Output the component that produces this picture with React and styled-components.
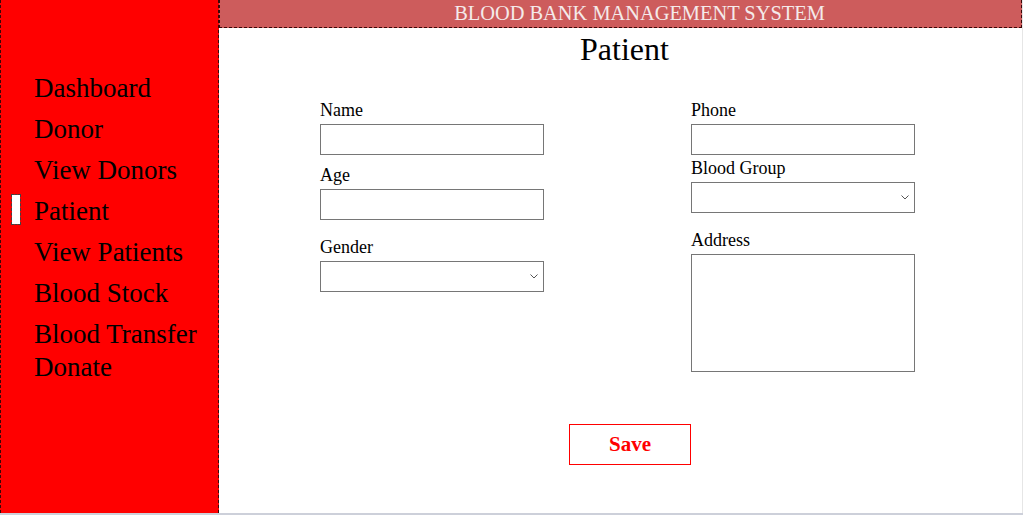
import React from "react";
import styled, { createGlobalStyle } from "styled-components";

const GlobalStyle = createGlobalStyle`
  html, body {
    margin: 0;
    padding: 0;
    background: #cdd0da;
    font-family: "Liberation Serif", "Times New Roman", serif;
  }
`;

const Layout = styled.div`
  display: flex;
  height: 513px;
  width: 1023px;
  background: #ffffff;
`;

const Sidebar = styled.nav`
  width: 217px;
  flex-shrink: 0;
  background: #ff0000;
  border-left: 1px dashed #3a0808;
  border-right: 1px dashed #3a0808;
  padding-top: 72px;
  box-sizing: content-box;
`;

const NavList = styled.ul`
  list-style: none;
  margin: 0;
  padding: 0 0 0 33px;
  display: flex;
  flex-direction: column;
  gap: 8px;
`;

const NavItem = styled.li`
  position: relative;
  font-size: 27px;
  line-height: 33px;
  color: #000000;

  &::before {
    content: "";
    display: ${(p) => (p.$active ? "block" : "none")};
    position: absolute;
    left: -22px;
    top: 0;
    width: 8px;
    height: 29px;
    background: #ffffff;
    outline: 1px dashed #444444;
  }
`;

const Main = styled.main`
  flex: 1;
  display: flex;
  flex-direction: column;
  border-right: 1px solid #e6e6e6;
`;

const Header = styled.header`
  height: 27px;
  background: #cd5c5c;
  border: 1px dashed #3a0808;
  border-top: none;
  color: #f4eaea;
  font-size: 20.4px;
  line-height: 27px;
  text-align: center;
  padding-left: 38px;
`;

const Title = styled.h1`
  margin: 3px 0 0;
  padding-left: 8px;
  font-size: 32px;
  font-weight: normal;
  text-align: center;
  line-height: 37px;
`;

const Form = styled.form`
  display: grid;
  grid-template-columns: 224px 224px;
  column-gap: 147px;
  padding: 32px 0 0 101px;
`;

const Column = styled.div`
  display: flex;
  flex-direction: column;
`;

const Field = styled.div`
  display: flex;
  flex-direction: column;
  margin-top: ${(p) => p.$gap || 0}px;
`;

const Label = styled.label`
  font-size: 18px;
  line-height: 21px;
  margin-bottom: 3px;
  color: #000000;
`;

const TextInput = styled.input`
  box-sizing: border-box;
  width: 224px;
  height: 31px;
  border: 1px solid #767676;
  border-radius: 0;
  padding: 0 4px;
  font-family: inherit;
  font-size: 16px;
`;

const SelectWrap = styled.div`
  position: relative;
  width: 224px;
  height: 31px;
`;

const Select = styled.select`
  box-sizing: border-box;
  appearance: none;
  width: 224px;
  height: 31px;
  border: 1px solid #767676;
  border-radius: 0;
  background: #ffffff;
  font-family: inherit;
  font-size: 16px;
  padding: 0 4px;
`;

const Chevron = styled.svg`
  position: absolute;
  right: 6px;
  top: 13px;
  width: 8px;
  height: 5px;
  pointer-events: none;
`;

const TextArea = styled.textarea`
  box-sizing: border-box;
  width: 224px;
  height: 118px;
  border: 1px solid #767676;
  border-radius: 0;
  resize: none;
  font-family: inherit;
`;

const ButtonRow = styled.div`
  display: flex;
  padding: 52px 0 0 350px;
`;

const SaveButton = styled.button`
  width: 122px;
  height: 41px;
  background: #ffffff;
  border: 1px solid #ff0000;
  color: #ff0000;
  font-family: "Liberation Serif", "Times New Roman", serif;
  font-size: 21px;
  font-weight: bold;
  cursor: pointer;
`;

const links = [
  "Dashboard",
  "Donor",
  "View Donors",
  "Patient",
  "View Patients",
  "Blood Stock",
  "Blood Transfer Donate",
];

const Dropdown = ({ options }) => (
  <SelectWrap>
    <Select>
      <option></option>
      {options.map((o) => (
        <option key={o}>{o}</option>
      ))}
    </Select>
    <Chevron viewBox="0 0 8 5">
      <path d="M0.5 0.5 L4 4 L7.5 0.5" fill="none" stroke="#555" strokeWidth="1" />
    </Chevron>
  </SelectWrap>
);

export default function App() {
  return (
    <>
      <GlobalStyle />
      <Layout>
        <Sidebar>
          <NavList>
            {links.map((l) => (
              <NavItem key={l} $active={l === "Patient"}>
                {l}
              </NavItem>
            ))}
          </NavList>
        </Sidebar>
        <Main>
          <Header>BLOOD BANK MANAGEMENT SYSTEM</Header>
          <Title>Patient</Title>
          <Form onSubmit={(e) => e.preventDefault()}>
            <Column>
              <Field>
                <Label>Name</Label>
                <TextInput type="text" />
              </Field>
              <Field $gap={10}>
                <Label>Age</Label>
                <TextInput type="text" />
              </Field>
              <Field $gap={17}>
                <Label>Gender</Label>
                <Dropdown options={["Male", "Female"]} />
              </Field>
            </Column>
            <Column>
              <Field>
                <Label>Phone</Label>
                <TextInput type="text" />
              </Field>
              <Field $gap={3}>
                <Label>Blood Group</Label>
                <Dropdown options={["A+", "A-", "B+", "B-", "O+", "O-", "AB+", "AB-"]} />
              </Field>
              <Field $gap={17}>
                <Label>Address</Label>
                <TextArea />
              </Field>
            </Column>
          </Form>
          <ButtonRow>
            <SaveButton type="button">Save</SaveButton>
          </ButtonRow>
        </Main>
      </Layout>
    </>
  );
}
